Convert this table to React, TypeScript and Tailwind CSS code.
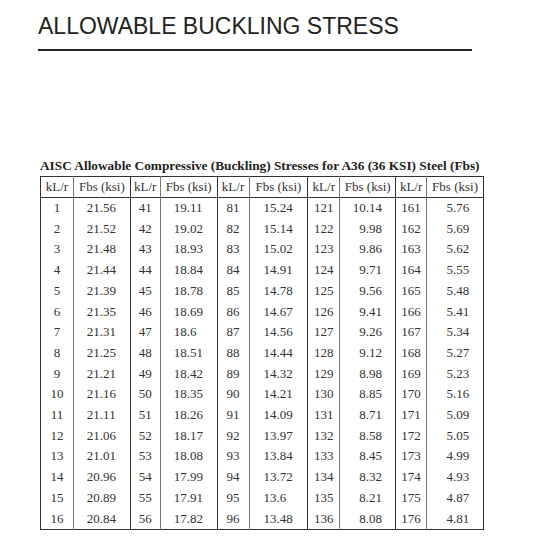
import React from "react";

const rows: [number, string][][] = [];
const data: string[][] = [
  ["21.56", "19.11", "15.24", "10.14", "5.76"],
  ["21.52", "19.02", "15.14", "9.98", "5.69"],
  ["21.48", "18.93", "15.02", "9.86", "5.62"],
  ["21.44", "18.84", "14.91", "9.71", "5.55"],
  ["21.39", "18.78", "14.78", "9.56", "5.48"],
  ["21.35", "18.69", "14.67", "9.41", "5.41"],
  ["21.31", "18.6", "14.56", "9.26", "5.34"],
  ["21.25", "18.51", "14.44", "9.12", "5.27"],
  ["21.21", "18.42", "14.32", "8.98", "5.23"],
  ["21.16", "18.35", "14.21", "8.85", "5.16"],
  ["21.11", "18.26", "14.09", "8.71", "5.09"],
  ["21.06", "18.17", "13.97", "8.58", "5.05"],
  ["21.01", "18.08", "13.84", "8.45", "4.99"],
  ["20.96", "17.99", "13.72", "8.32", "4.93"],
  ["20.89", "17.91", "13.6", "8.21", "4.87"],
  ["20.84", "17.82", "13.48", "8.08", "4.81"],
];
data.forEach((r, i) => {
  rows.push(r.map((v, j) => [i + 1 + j * 40, v]));
});

const widths = [33, 57, 30, 57, 32, 59, 32, 56, 31, 57];

function Num({ value }: { value: string }) {
  const [int, frac] = value.split(".");
  return (
    <span className="inline-flex">
      <span className="w-[13px] text-right">{int}</span>
      <span className="w-[17px] text-left">.{frac}</span>
    </span>
  );
}

export default function App() {
  return (
    <div className="w-[537px] h-[546px] bg-white pl-[38px] pt-[13px] text-[#222]">
      {/* page heading */}
      <div className="w-[434px] border-b-[2px] border-[#222] pb-[9px]">
        <h1
          className="text-[23px] leading-[27px]"
          style={{ fontFamily: '"Liberation Sans", Arial, sans-serif' }}
        >
          ALLOWABLE BUCKLING STRESS
        </h1>
      </div>

      <div
        className="mt-[106px] ml-[2px] w-[444px]"
        style={{ fontFamily: '"Liberation Serif", "Times New Roman", serif' }}
      >
        <div className="text-[13.3px] leading-[17px] font-bold whitespace-nowrap">
          AISC Allowable Compressive (Buckling) Stresses for A36 (36 KSI) Steel (Fbs)
        </div>
        <table className="table-fixed border-collapse border-[1.5px] border-[#333] text-[13px] text-[#333] mt-[2px]">
          <colgroup>
            {widths.map((w, i) => (
              <col key={i} style={{ width: w }} />
            ))}
          </colgroup>
          <thead>
            <tr className="h-[20px] border-b-[1.5px] border-[#333]">
              {widths.map((_, i) => (
                <th
                  key={i}
                  className={`font-normal text-center p-0 leading-[20px] ${
                    i < widths.length - 1
                      ? i % 2 === 0
                        ? "border-r border-[#777]"
                        : "border-r-[1.5px] border-[#333]"
                      : ""
                  }`}
                >
                  {i % 2 === 0 ? "kL/r" : "Fbs (ksi)"}
                </th>
              ))}
            </tr>
          </thead>
          <tbody>
            {rows.map((r, ri) => (
              <tr key={ri} className="h-[20.7px]">
                {r.map(([k, v], j) => (
                  <React.Fragment key={j}>
                    <td className="text-center p-0 border-r border-[#777] leading-[20.7px]">
                      {k}
                    </td>
                    <td
                      className={`text-center p-0 leading-[20.7px] ${
                        j < 4 ? "border-r-[1.5px] border-[#333]" : ""
                      }`}
                    >
                      <Num value={v} />
                    </td>
                  </React.Fragment>
                ))}
              </tr>
            ))}
          </tbody>
        </table>
      </div>
    </div>
  );
}
